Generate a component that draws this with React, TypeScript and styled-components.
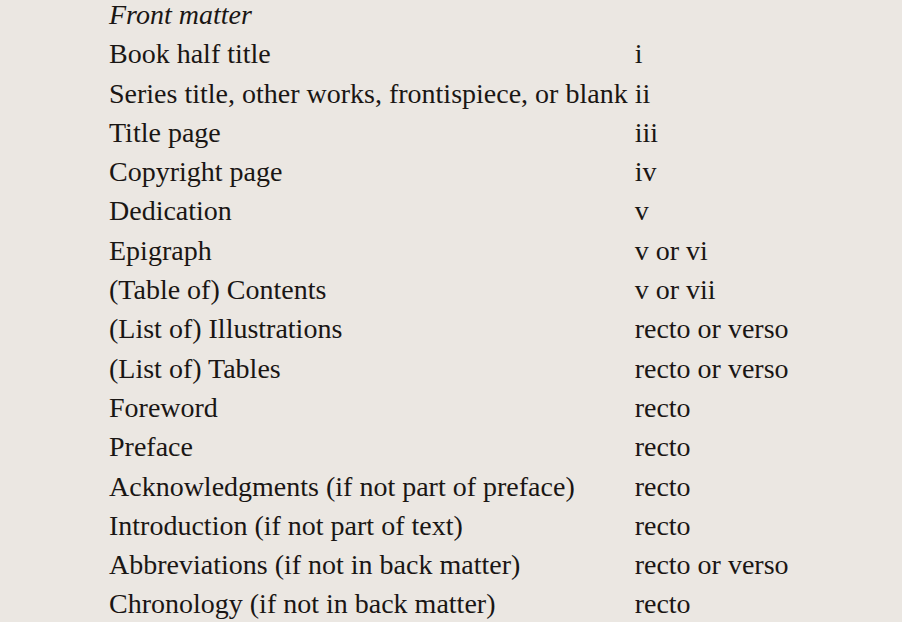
import React from 'react';
import styled, { createGlobalStyle } from 'styled-components';

const GlobalStyle = createGlobalStyle`
  html, body {
    margin: 0;
    padding: 0;
    background: #ebe7e2;
  }
`;

const Page = styled.div`
  width: 902px;
  height: 622px;
  overflow: hidden;
  background: #ebe7e2;
  padding: 0 0 0 109px;
  box-sizing: border-box;
`;

const Table = styled.div`
  display: grid;
  grid-template-columns: max-content max-content;
  column-gap: 7px;
  grid-auto-rows: 39.3px;
  margin-top: -5px;
  font-family: "Liberation Serif", "Times New Roman", serif;
  font-size: 28px;
  line-height: 39.3px;
  color: #1a1614;
`;

const Heading = styled.div`
  grid-column: 1 / span 2;
  font-style: italic;
`;

const Cell = styled.div`
  white-space: nowrap;
`;

const rows: [string, string][] = [
  ['Book half title', 'i'],
  ['Series title, other works, frontispiece, or blank', 'ii'],
  ['Title page', 'iii'],
  ['Copyright page', 'iv'],
  ['Dedication', 'v'],
  ['Epigraph', 'v or vi'],
  ['(Table of) Contents', 'v or vii'],
  ['(List of) Illustrations', 'recto or verso'],
  ['(List of) Tables', 'recto or verso'],
  ['Foreword', 'recto'],
  ['Preface', 'recto'],
  ['Acknowledgments (if not part of preface)', 'recto'],
  ['Introduction (if not part of text)', 'recto'],
  ['Abbreviations (if not in back matter)', 'recto or verso'],
  ['Chronology (if not in back matter)', 'recto'],
];

const App: React.FC = () => (
  <>
    <GlobalStyle />
    <Page>
      <Table>
        <Heading>Front matter</Heading>
        {rows.map(([part, page]) => (
          <React.Fragment key={part}>
            <Cell>{part}</Cell>
            <Cell>{page}</Cell>
          </React.Fragment>
        ))}
      </Table>
    </Page>
  </>
);

export default App;
